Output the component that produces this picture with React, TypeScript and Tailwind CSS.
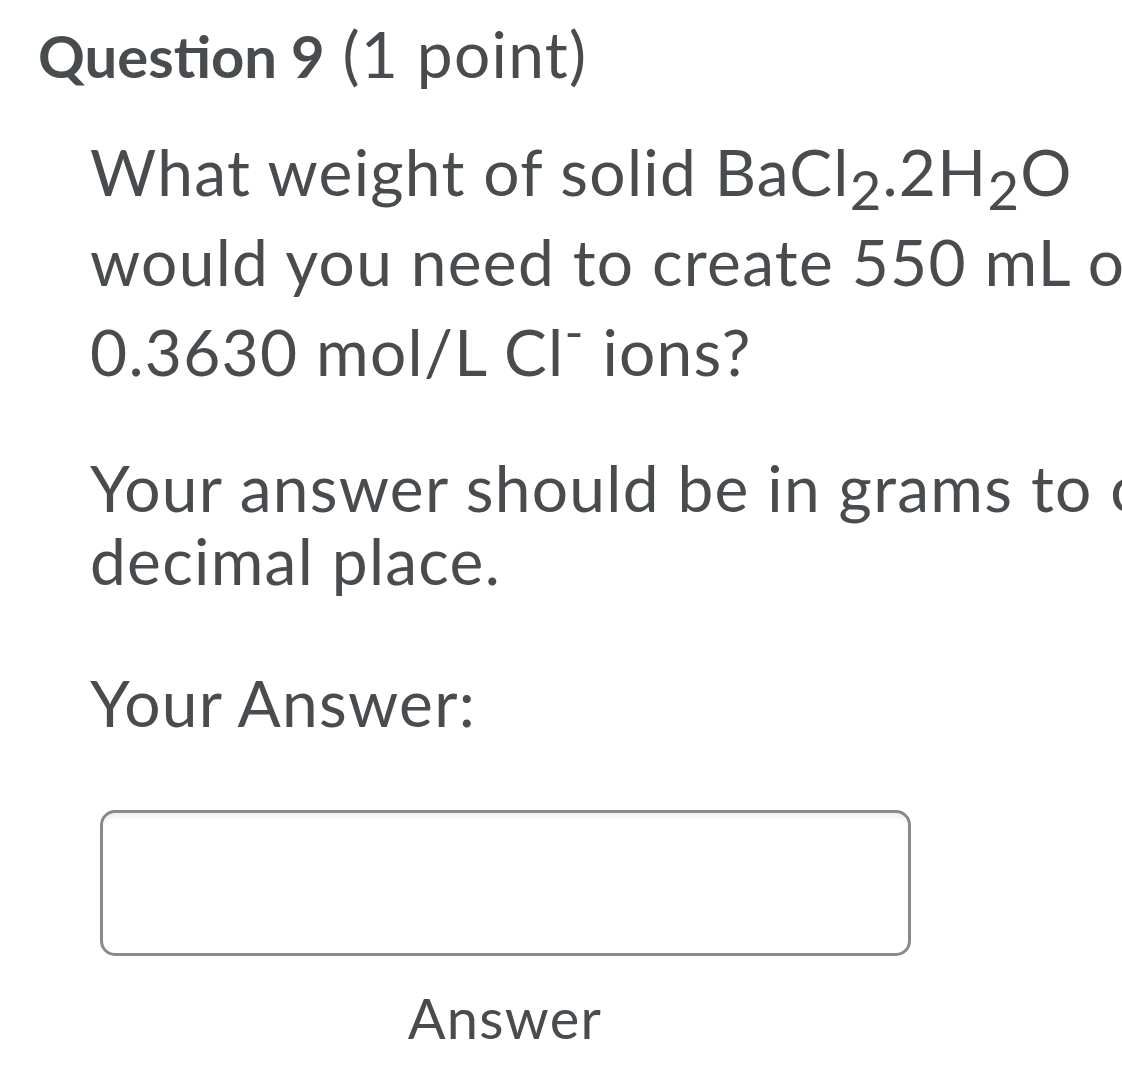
export default function App() {
  return (
    <main
      className="h-[1080px] w-[1122px] overflow-hidden bg-white text-[#494c4e]"
      style={{ fontFamily: "Lato, 'Open Sans', sans-serif" }}
    >
      <div className="flex w-[1300px] flex-col pl-[38px] pt-[16px]">
        <h1 className="text-[64px] leading-[76px] tracking-[0.02em]">
          <span className="text-[58px] font-bold tracking-normal">Question 9</span>{" "}
          <span className="font-normal">(1 point)</span>
        </h1>

        <div className="flex flex-col pl-[52px] text-[64px] tracking-[0.02em]">
          <p className="mt-[33px] w-[1150px] leading-[90px]">
            What weight of solid BaCl<sub className="text-[0.85em]">2</sub>.2H
            <sub className="text-[0.85em]">2</sub>O would you need to create 550
            mL of 0.3630 mol/L Cl<sup className="text-[0.8em]">-</sup> ions?
          </p>

          <p className="mt-[54px] w-[1150px] leading-[73px]">
            Your answer should be in grams to one decimal place.
          </p>

          <p className="mt-[69px] leading-[73px]">Your Answer:</p>

          <div className="mt-[71px] ml-[10px] h-[146px] w-[811px] rounded-[15px] border-[3px] border-[#8a8a8a] bg-white shadow-[inset_0_6px_4px_-2px_rgba(0,0,0,0.06)]" />

          <p className="mt-[25px] w-[830px] text-center text-[56px] leading-[73px]">
            Answer
          </p>
        </div>
      </div>
    </main>
  );
}
